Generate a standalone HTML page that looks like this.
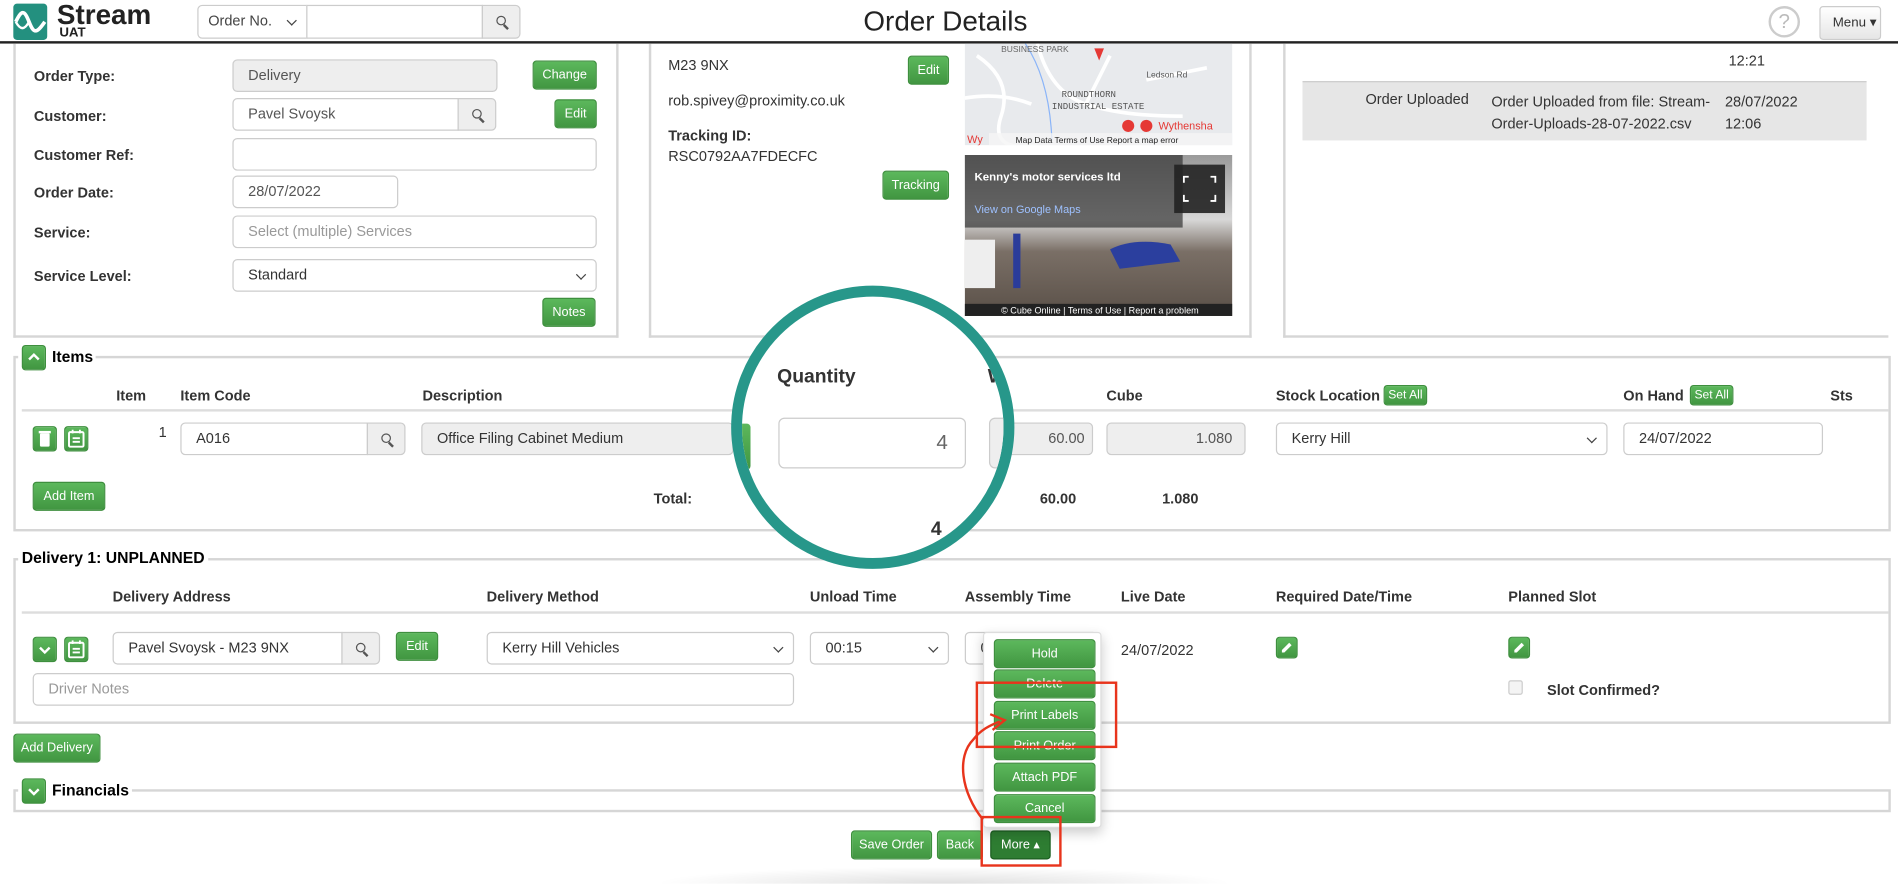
<!DOCTYPE html>
<html><head><meta charset="utf-8">
<style>
*{box-sizing:border-box;margin:0;padding:0}
html,body{width:1898px;height:881px;overflow:hidden;background:#fff}
#w{position:absolute;left:0;top:0;width:1568px;height:728px;transform:scale(1.2105);transform-origin:0 0;font-family:"Liberation Sans",sans-serif;color:#333;font-size:12px}
.a{position:absolute}
.lbl{position:absolute;font-weight:bold;font-size:12px;color:#333}
.in{position:absolute;border:1px solid #ccc;border-radius:4px;background:#fff;height:27px;line-height:25px;padding-left:12px;font-size:12px;color:#555}
.ro{background:#eee}
.ph{color:#999}
.sb{position:absolute;border:1px solid #ccc;background:#eee;border-radius:0 4px 4px 0;height:27px}
.sb:after{content:"";position:absolute;left:11px;top:8px;width:6px;height:6px;border:1.5px solid #555;border-radius:50%}
.sb:before{content:"";position:absolute;left:18px;top:15px;width:1.5px;height:5px;background:#555;transform:rotate(-45deg)}
.sel:after{content:"";position:absolute;right:9px;top:9px;width:5px;height:5px;border-right:1.5px solid #444;border-bottom:1.5px solid #444;transform:rotate(45deg)}
.btn{position:absolute;background:linear-gradient(#5cb85c,#419641);border:1px solid #3e8f3e;border-radius:3px;color:#fff;font-size:10.5px;text-align:center;line-height:22px;height:24px}
.fs{position:absolute;border:2px solid #d6d6d6}
.leg{position:absolute;background:#fff;font-weight:bold;font-size:13px;color:#000;padding:0 3px}
.hline{position:absolute;height:2px;background:#ddd}
.ic{position:absolute;width:20px;height:21px;background:linear-gradient(#5cb85c,#419641);border:1px solid #3e8f3e;border-radius:3px}
</style></head><body><div id="w">
<div class="a" style="left:0;top:0;width:1568px;height:36px;border-bottom:2px solid #222"></div>
<div class="a" style="left:11px;top:3px;width:28px;height:30px;background:#23907f;border-radius:3px"></div>
<svg class="a" style="left:11px;top:3px" width="28" height="30"><path d="M2 15 C7 5 9 5 13 15 S19 25 26 15" stroke="#fff" stroke-width="3" fill="none"/><path d="M2 15 C6 22 9 22 13 15" stroke="#fff" stroke-width="2" fill="none"/></svg>
<div class="a" style="left:47px;top:-1px;font-size:23px;font-weight:bold;color:#222">Stream</div>
<div class="a" style="left:49px;top:21px;font-size:11px;font-weight:bold;color:#222">UAT</div>
<div class="in sel" style="left:163px;top:4px;width:91px;height:28px;border-radius:4px 0 0 4px;padding-left:8px;color:#444">Order No.</div>
<div class="in" style="left:253px;top:4px;width:146px;height:28px;border-radius:0"></div>
<div class="sb" style="left:398px;top:4px;width:32px;height:28px"></div>
<div class="a" style="left:600px;top:4px;width:362px;text-align:center;font-size:23px;color:#222">Order Details</div>
<div class="a" style="left:1461px;top:5px;width:26px;height:26px;border:2px solid #ccc;border-radius:50%;text-align:center;line-height:22px;color:#bbb;font-size:17px">?</div>
<div class="a" style="left:1503px;top:5px;width:51px;height:28px;border:1px solid #ccc;border-radius:3px;background:linear-gradient(#fff,#e6e6e6);font-size:11px;line-height:26px;padding-left:10px;color:#333">Menu ▾</div>

<div class="fs" style="left:11px;top:36px;width:500px;height:243px;border-top:none"></div>
<div class="lbl" style="left:28px;top:56px">Order Type:</div>
<div class="in ro" style="left:192px;top:49px;width:219px">Delivery</div>
<div class="btn" style="left:440px;top:50px;width:53px">Change</div>
<div class="lbl" style="left:28px;top:89px">Customer:</div>
<div class="in" style="left:192px;top:81px;width:187px;border-radius:4px 0 0 4px">Pavel Svoysk</div>
<div class="sb" style="left:378px;top:81px;width:32px"></div>
<div class="btn" style="left:458px;top:82px;width:35px">Edit</div>
<div class="lbl" style="left:28px;top:121px">Customer Ref:</div>
<div class="in" style="left:192px;top:114px;width:301px"></div>
<div class="lbl" style="left:28px;top:152px">Order Date:</div>
<div class="in" style="left:192px;top:145px;width:137px">28/07/2022</div>
<div class="lbl" style="left:28px;top:185px">Service:</div>
<div class="in ph" style="left:192px;top:178px;width:301px">Select (multiple) Services</div>
<div class="lbl" style="left:28px;top:221px">Service Level:</div>
<div class="in sel" style="left:192px;top:214px;width:301px;color:#333">Standard</div>
<div class="btn" style="left:448px;top:246px;width:44px">Notes</div>

<div class="fs" style="left:536px;top:36px;width:498px;height:243px;border-top:none"></div>
<div class="a" style="left:552px;top:47px">M23 9NX</div>
<div class="a" style="left:552px;top:76px">rob.spivey@proximity.co.uk</div>
<div class="lbl" style="left:552px;top:105px">Tracking ID:</div>
<div class="a" style="left:552px;top:122px">RSC0792AA7FDECFC</div>
<div class="btn" style="left:750px;top:46px;width:34px">Edit</div>
<div class="btn" style="left:729px;top:141px;width:55px">Tracking</div>
<svg class="a" style="left:797px;top:36px" width="221" height="84"><rect width="221" height="84" fill="#e8eaed"/><g stroke="#fff" stroke-width="3" fill="none"><path d="M10 10 Q40 30 30 60 T60 84"/><path d="M60 0 Q70 40 100 50 T180 60"/><path d="M100 50 L120 10"/><path d="M150 30 L200 20"/><path d="M0 45 Q30 40 55 50"/></g><path d="M50 0 Q70 30 72 80" stroke="#8ab4f8" fill="none"/><text x="30" y="7" font-size="7" fill="#666" font-family="Liberation Sans">BUSINESS PARK</text><text x="150" y="28" font-size="7" fill="#555" font-family="Liberation Sans">Ledson Rd</text><text x="80" y="44" font-size="7.5" fill="#555" font-family="Liberation Mono">ROUNDTHORN</text><text x="72" y="54" font-size="7.5" fill="#555" font-family="Liberation Mono">INDUSTRIAL ESTATE</text><path d="M107 4 l4 10 l4 -10z" fill="#e53935"/><circle cx="135" cy="68" r="5" fill="#e53935"/><circle cx="150" cy="68" r="5" fill="#e53935"/><text x="160" y="71" font-size="9" fill="#e53935" font-family="Liberation Sans">Wythensha</text><rect x="20" y="74" width="201" height="10" fill="#f5f5f5" opacity=".8"/><text x="2" y="82" font-size="9" fill="#e53935" font-family="Liberation Sans">Wy</text><text x="42" y="82" font-size="7" fill="#222" font-family="Liberation Sans">Map Data   Terms of Use   Report a map error</text></svg>
<svg class="a" style="left:797px;top:128px" width="221" height="133"><defs><linearGradient id="g" x1="0" y1="0" x2="0" y2="1"><stop offset="0" stop-color="#9a9a9a"/><stop offset=".4" stop-color="#d8d8d8"/><stop offset=".6" stop-color="#7a6f66"/><stop offset="1" stop-color="#5a5048"/></linearGradient></defs><rect width="221" height="133" fill="url(#g)"/><rect x="0" y="0" width="180" height="60" fill="#333" opacity=".7"/><rect x="173" y="8" width="42" height="40" fill="#222" opacity=".9"/><path d="M185 18h-4v5M203 18h4v5M185 38h-4v-5M203 38h4v-5" stroke="#fff" stroke-width="1.5" fill="none"/><text x="8" y="21" font-size="9.5" font-weight="bold" fill="#fff" font-family="Liberation Sans">Kenny's motor services ltd</text><text x="8" y="48" font-size="9" fill="#9ec1ff" font-family="Liberation Sans">View on Google Maps</text><path d="M120 78 q20 -10 50 -4 l8 14 l-50 6z" fill="#2b3f9e"/><rect x="0" y="70" width="25" height="40" fill="#eee"/><rect x="40" y="65" width="6" height="45" fill="#2a3c9a"/><rect x="0" y="123" width="221" height="10" fill="#222"/><text x="30" y="131" font-size="7.5" fill="#fff" font-family="Liberation Sans">© Cube Online | Terms of Use | Report a problem</text></svg>

<div class="fs" style="left:1060px;top:36px;width:500px;height:243px;border-top:none;border-right:none"></div>
<div class="a" style="left:1428px;top:43px">12:21</div>
<div class="a" style="left:1076px;top:67px;width:466px;height:49px;background:#e6e6e6;border-top:1px solid #ccc"></div>
<div class="a" style="left:1128px;top:75px">Order Uploaded</div>
<div class="a" style="left:1232px;top:75px;line-height:18px">Order Uploaded from file: Stream-<br>Order-Uploads-28-07-2022.csv</div>
<div class="a" style="left:1425px;top:75px;line-height:18px">28/07/2022<br>12:06</div>

<div class="fs" style="left:11px;top:294px;width:1551px;height:145px"></div>
<div class="leg" style="left:15px;top:285px;width:64px;height:20px"></div>
<div class="ic" style="left:18px;top:285px"><svg width="18" height="19"><path d="M5 11 L9 7 L13 11" stroke="#fff" stroke-width="2" fill="none"/></svg></div>
<div class="a" style="left:43px;top:287px;font-weight:bold;font-size:13px;color:#000">Items</div>
<div class="lbl" style="left:96px;top:320px">Item</div>
<div class="lbl" style="left:149px;top:320px">Item Code</div>
<div class="lbl" style="left:349px;top:320px">Description</div>
<div class="lbl" style="left:914px;top:320px">Cube</div>
<div class="lbl" style="left:1054px;top:320px">Stock Location</div>
<div class="btn" style="left:1143px;top:318px;width:36px;height:17px;line-height:15px;font-size:10px">Set All</div>
<div class="lbl" style="left:1341px;top:320px">On Hand</div>
<div class="btn" style="left:1396px;top:318px;width:36px;height:17px;line-height:15px;font-size:10px">Set All</div>
<div class="lbl" style="left:1512px;top:320px">Sts</div>
<div class="hline" style="left:18px;top:338px;width:1542px"></div>
<div class="ic" style="left:27px;top:352px"><svg width="18" height="19"><rect x="5" y="5" width="8" height="11" rx="1" fill="#fff"/><rect x="4" y="3" width="10" height="2" fill="#fff"/></svg></div>
<div class="ic" style="left:53px;top:352px"><svg width="18" height="19"><rect x="3" y="4" width="12" height="12" rx="1" stroke="#fff" stroke-width="1.6" fill="none"/><path d="M6 9h6M6 12h6M6 2v3M12 2v3" stroke="#fff" stroke-width="1.5"/></svg></div>
<div class="a" style="left:131px;top:350px">1</div>
<div class="in" style="left:149px;top:349px;width:155px;border-radius:4px 0 0 4px;color:#333">A016</div>
<div class="sb" style="left:303px;top:349px;width:32px"></div>
<div class="in ro" style="left:348px;top:349px;width:258px;color:#333">Office Filing Cabinet Medium</div>
<div class="in ro" style="left:817px;top:349px;width:86px;text-align:right;padding-right:6px">60.00</div>
<div class="in ro" style="left:914px;top:349px;width:115px;text-align:right;padding-right:10px">1.080</div>
<div class="in sel" style="left:1054px;top:349px;width:274px;color:#333">Kerry Hill</div>
<div class="in" style="left:1341px;top:349px;width:165px;color:#333">24/07/2022</div>
<div class="btn" style="left:27px;top:398px;width:60px">Add Item</div>
<div class="lbl" style="left:540px;top:405px">Total:</div>
<div class="lbl" style="left:859px;top:405px">60.00</div>
<div class="lbl" style="left:960px;top:405px">1.080</div>

<div class="fs" style="left:11px;top:461px;width:1551px;height:137px"></div>
<div class="leg" style="left:15px;top:453px">Delivery 1: UNPLANNED</div>
<div class="lbl" style="left:93px;top:486px">Delivery Address</div>
<div class="lbl" style="left:402px;top:486px">Delivery Method</div>
<div class="lbl" style="left:669px;top:486px">Unload Time</div>
<div class="lbl" style="left:797px;top:486px">Assembly Time</div>
<div class="lbl" style="left:926px;top:486px">Live Date</div>
<div class="lbl" style="left:1054px;top:486px">Required Date/Time</div>
<div class="lbl" style="left:1246px;top:486px">Planned Slot</div>
<div class="hline" style="left:18px;top:505px;width:1542px"></div>
<div class="ic" style="left:27px;top:526px"><svg width="18" height="19"><path d="M5 8 L9 12 L13 8" stroke="#fff" stroke-width="2" fill="none"/></svg></div>
<div class="ic" style="left:53px;top:526px"><svg width="18" height="19"><rect x="3" y="4" width="12" height="12" rx="1" stroke="#fff" stroke-width="1.6" fill="none"/><path d="M6 9h6M6 12h6M6 2v3M12 2v3" stroke="#fff" stroke-width="1.5"/></svg></div>
<div class="in" style="left:93px;top:522px;width:190px;border-radius:4px 0 0 4px;color:#333">Pavel Svoysk - M23 9NX</div>
<div class="sb" style="left:282px;top:522px;width:32px"></div>
<div class="btn" style="left:327px;top:522px;width:35px">Edit</div>
<div class="in sel" style="left:402px;top:522px;width:254px;color:#333">Kerry Hill Vehicles</div>
<div class="in sel" style="left:669px;top:522px;width:115px;color:#333">00:15</div>
<div class="in sel" style="left:797px;top:522px;width:110px;color:#333">00</div>
<div class="a" style="left:926px;top:530px">24/07/2022</div>
<div class="ic" style="left:1054px;top:526px;width:18px;height:18px"><svg width="16" height="16"><path d="M4 12 L4 10 L10 4 L12 6 L6 12z" fill="#fff"/></svg></div>
<div class="ic" style="left:1246px;top:526px;width:18px;height:18px"><svg width="16" height="16"><path d="M4 12 L4 10 L10 4 L12 6 L6 12z" fill="#fff"/></svg></div>
<div class="in ph" style="left:27px;top:556px;width:629px">Driver Notes</div>
<div class="a" style="left:1246px;top:562px;width:12px;height:12px;border:1px solid #ccc;border-radius:2px;background:#f4f4f4"></div>
<div class="lbl" style="left:1278px;top:563px">Slot Confirmed?</div>
<div class="btn" style="left:11px;top:606px;width:72px">Add Delivery</div>

<div class="fs" style="left:11px;top:652px;width:1551px;height:19px"></div>
<div class="leg" style="left:15px;top:643px;width:94px;height:20px"></div>
<div class="ic" style="left:18px;top:643px"><svg width="18" height="19"><path d="M5 8 L9 12 L13 8" stroke="#fff" stroke-width="2" fill="none"/></svg></div>
<div class="a" style="left:43px;top:645px;font-weight:bold;font-size:13px;color:#000">Financials</div>

<div class="btn" style="left:703px;top:686px;width:67px">Save Order</div>
<div class="btn" style="left:774px;top:686px;width:38px">Back</div>
<div class="btn" style="left:818px;top:686px;width:50px;background:#2e7d32;border-color:#1b5e20">More ▴</div>
<div class="a" style="left:540px;top:716px;width:480px;height:14px;background:radial-gradient(ellipse at 50% 100%,rgba(0,0,0,.12),rgba(0,0,0,0) 70%)"></div>

<div class="a" style="left:812px;top:522px;width:98px;height:162px;background:#fff;border:1px solid #ddd;border-radius:3px;box-shadow:0 4px 10px rgba(0,0,0,.2)"></div>
<div class="btn" style="left:821px;top:528px;width:84px">Hold</div>
<div class="btn" style="left:821px;top:553px;width:84px">Delete</div>
<div class="btn" style="left:821px;top:579px;width:84px">Print Labels</div>
<div class="btn" style="left:821px;top:604px;width:84px">Print Order</div>
<div class="btn" style="left:821px;top:630px;width:84px">Attach PDF</div>
<div class="btn" style="left:821px;top:656px;width:84px">Cancel</div>
<div class="a" style="left:806px;top:563px;width:117px;height:55px;border:2px solid #e8341c"></div>
<div class="a" style="left:810px;top:674px;width:67px;height:42px;border:2px solid #e8341c"></div>
<svg class="a" style="left:790px;top:585px" width="50" height="95"><path d="M22 92 C4 70 0 40 14 26 C20 18 28 14 36 11" stroke="#e8341c" stroke-width="2" fill="none"/><path d="M28 5 L40 10 L30 18" stroke="#e8341c" stroke-width="2" fill="none"/></svg>

<div class="a" style="left:604px;top:236px;width:234px;height:234px;border-radius:50%;border:9px solid #27978a;background:#fff;overflow:hidden">
  <div class="a" style="left:29px;top:58px;font-weight:bold;font-size:16px;color:#333">Quantity</div>
  <div class="a" style="left:203px;top:58px;font-weight:bold;font-size:16px;color:#333">W</div>
  <div class="a" style="left:-8px;top:105px;width:15px;height:38px;background:linear-gradient(#5cb85c,#419641);border-radius:3px"></div>
  <div class="a" style="left:30px;top:100px;width:155px;height:42px;border:1.5px solid #ccc;border-radius:5px;text-align:right;padding-right:14px;line-height:40px;font-size:17px;color:#666">4</div>
  <div class="a" style="left:204px;top:100px;width:30px;height:42px;border:1.5px solid #ccc;border-radius:5px;background:#eee"></div>
  <div class="a" style="left:156px;top:184px;font-weight:bold;font-size:16px;color:#333">4</div>
</div>
</div></body></html>
